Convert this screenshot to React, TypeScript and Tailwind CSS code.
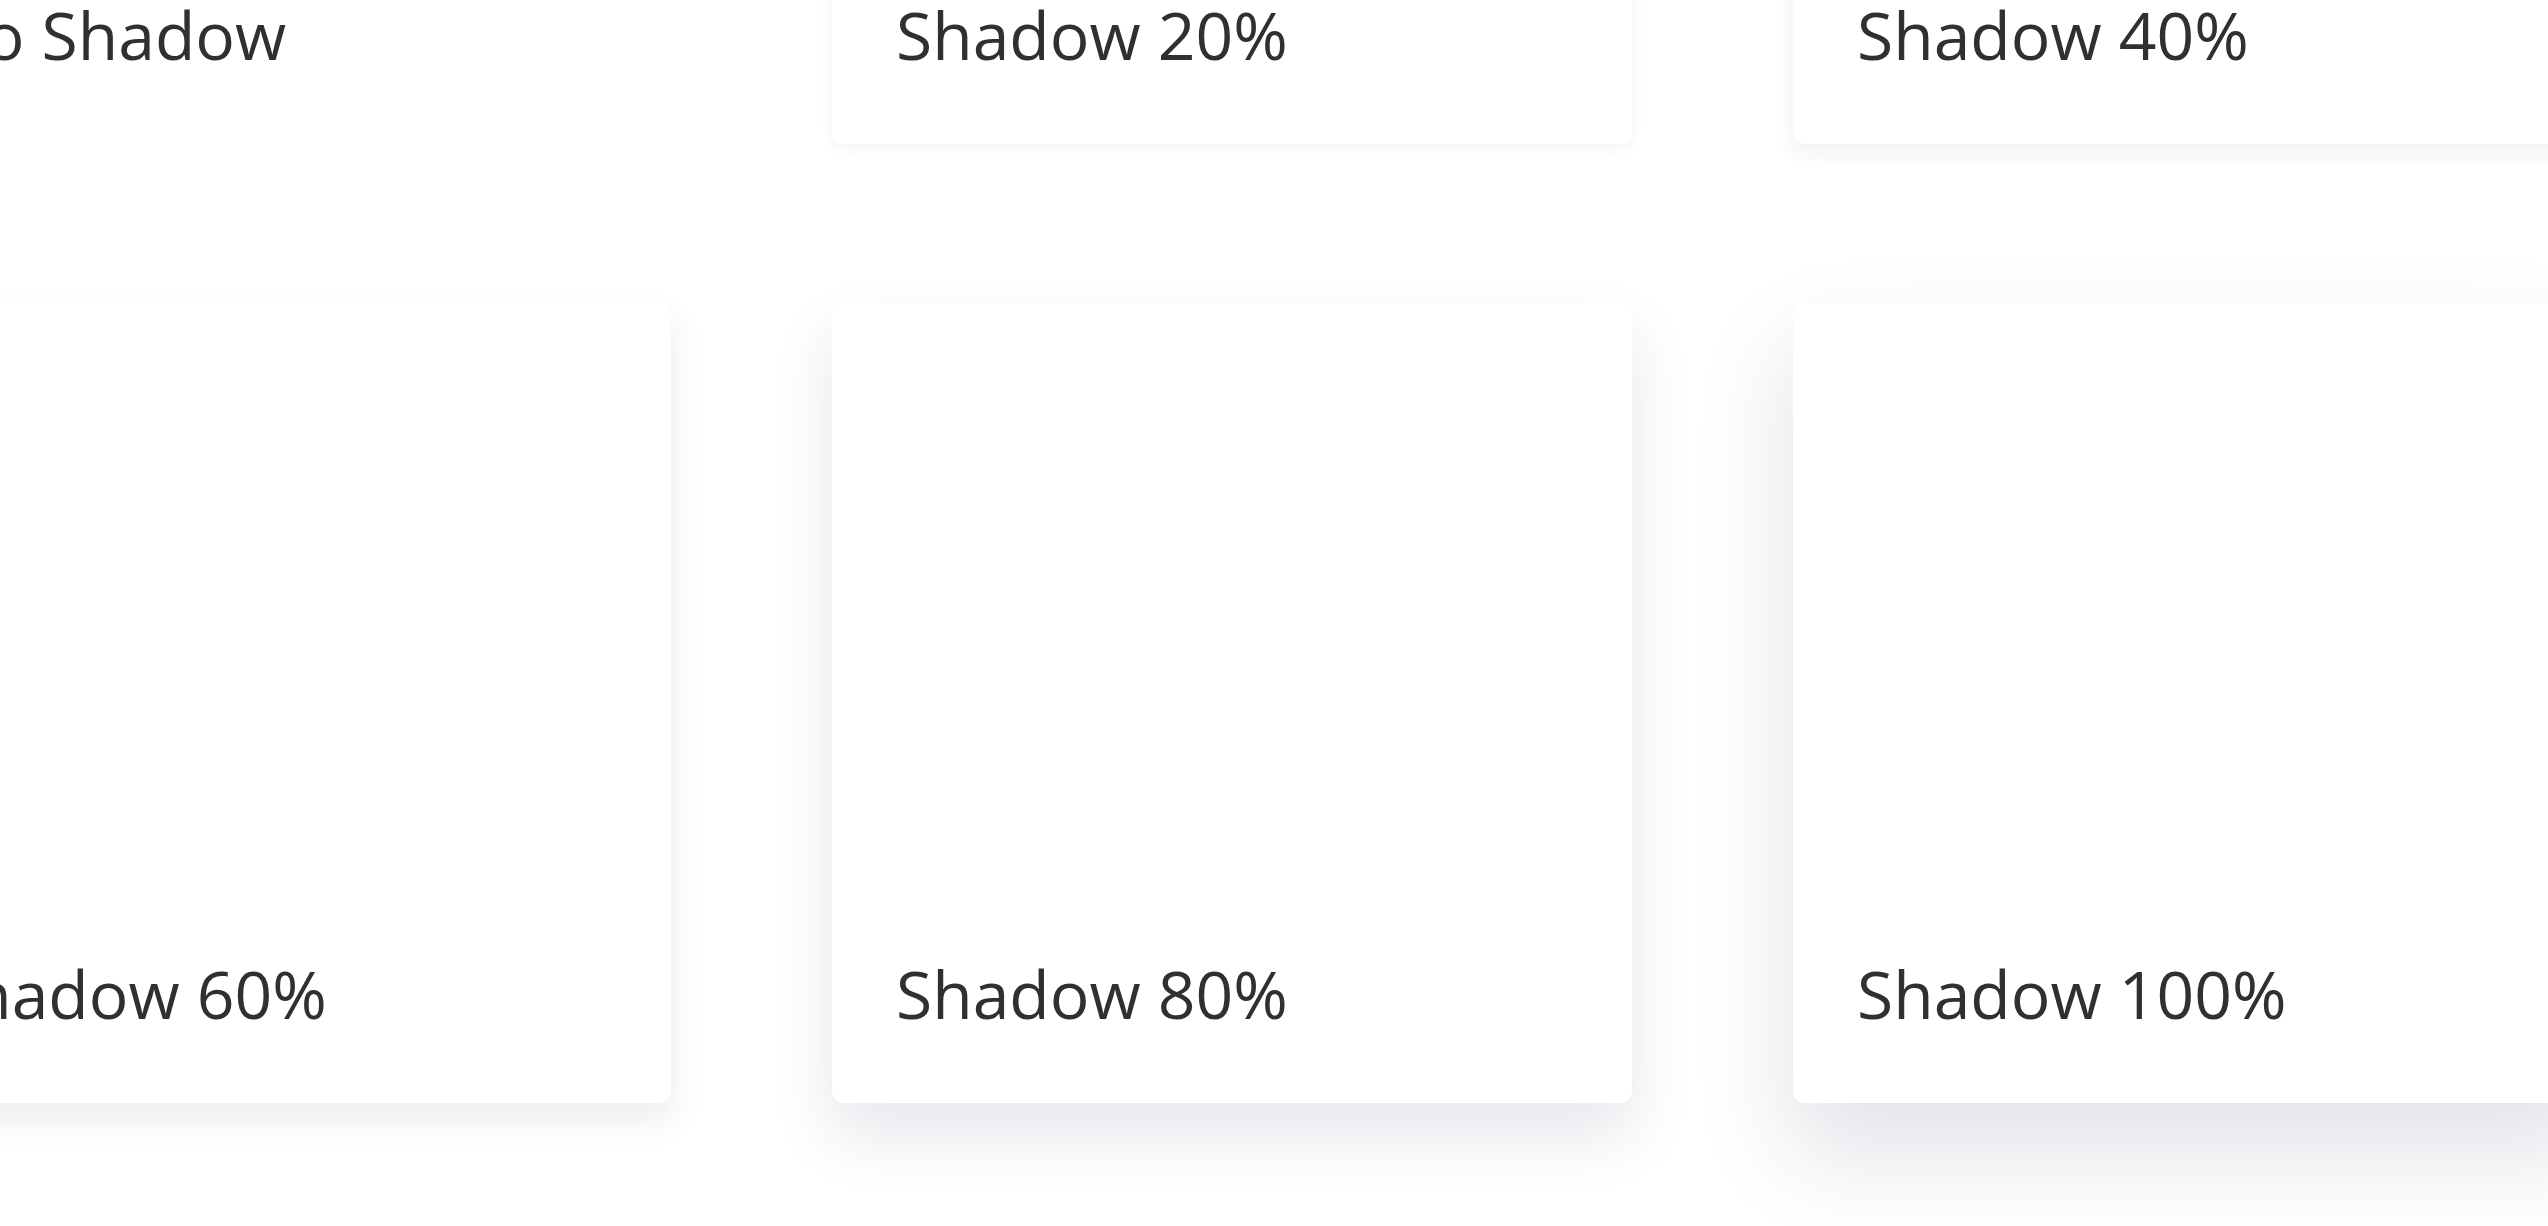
import React from 'react';

type Card = {
  label: string;
  shadow: string;
};

const cards: Card[] = [
  { label: 'No Shadow', shadow: '' },
  { label: 'Shadow 20%', shadow: 'shadow-[0_4px_14px_rgba(40,40,90,0.05)]' },
  { label: 'Shadow 40%', shadow: 'shadow-[0_8px_22px_rgba(40,40,90,0.07)]' },
  { label: 'Shadow 60%', shadow: 'shadow-[0_16px_36px_rgba(40,40,90,0.09)]' },
  { label: 'Shadow 80%', shadow: 'shadow-[0_32px_64px_rgba(40,40,90,0.11)]' },
  { label: 'Shadow 100%', shadow: 'shadow-[0_48px_100px_rgba(40,40,90,0.14)]' },
];

function ShadowCard({ label, shadow }: Card) {
  return (
    <div className={`flex h-[800px] w-[800px] flex-col justify-end rounded-[12px] bg-white px-[64px] pb-[66px] ${shadow}`}>
      <p className="text-[66px] leading-[1.3] text-[#2e3033]">{label}</p>
    </div>
  );
}

export default function App() {
  return (
    <div
      className="h-[1226px] w-[2548px] overflow-hidden bg-white"
      style={{ fontFamily: '"Open Sans", "Noto Sans", sans-serif' }}
    >
      <div className="-ml-[129px] -mt-[656px] grid w-max grid-cols-[800px_800px_800px] gap-x-[161px] gap-y-[159px]">
        {cards.map((c) => (
          <ShadowCard key={c.label} {...c} />
        ))}
      </div>
    </div>
  );
}
